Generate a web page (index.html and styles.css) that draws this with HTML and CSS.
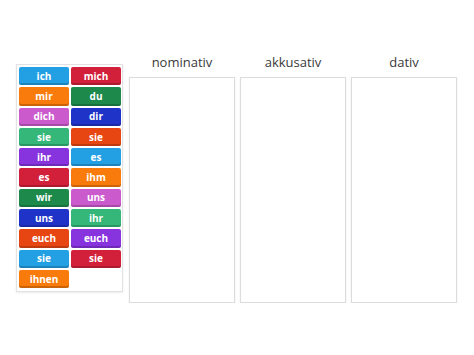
FILE: index.html
```html
<!DOCTYPE html>
<html lang="de">
<head>
<meta charset="utf-8">
<link rel="stylesheet" href="styles.css">
</head>
<body>
<div class="page">
  <div class="bank">
    <div class="tile blue">ich</div>
    <div class="tile red">mich</div>
    <div class="tile orange">mir</div>
    <div class="tile green">du</div>
    <div class="tile magenta">dich</div>
    <div class="tile navy">dir</div>
    <div class="tile teal">sie</div>
    <div class="tile vermilion">sie</div>
    <div class="tile purple">ihr</div>
    <div class="tile blue">es</div>
    <div class="tile red">es</div>
    <div class="tile orange">ihm</div>
    <div class="tile green">wir</div>
    <div class="tile magenta">uns</div>
    <div class="tile navy">uns</div>
    <div class="tile teal">ihr</div>
    <div class="tile vermilion">euch</div>
    <div class="tile purple">euch</div>
    <div class="tile blue">sie</div>
    <div class="tile red">sie</div>
    <div class="tile orange">ihnen</div>
  </div>
  <div class="groups">
    <div class="group">
      <div class="group-title">nominativ</div>
      <div class="group-box"></div>
    </div>
    <div class="group">
      <div class="group-title">akkusativ</div>
      <div class="group-box"></div>
    </div>
    <div class="group">
      <div class="group-title">dativ</div>
      <div class="group-box"></div>
    </div>
  </div>
</div>
</body>
</html>
```

FILE: styles.css
```css
html, body {
  margin: 0;
  padding: 0;
  background: #ffffff;
}

body {
  font-family: "Open Sans", "Liberation Sans", sans-serif;
}

.page {
  display: flex;
  align-items: flex-start;
  padding: 53px 0 0 16px;
}

.bank {
  margin-top: 11px;
  display: grid;
  grid-template-columns: 50px 50px;
  grid-auto-rows: 18.3px;
  column-gap: 2px;
  row-gap: 2px;
  padding: 2px 1px 2px 2px;
  border: 1px solid #e2e2e2;
  box-shadow: 0 1px 2px rgba(0, 0, 0, 0.08);
  background: #fff;
  height: 222px;
  box-sizing: content-box;
  align-content: start;
}

.tile {
  display: flex;
  align-items: center;
  justify-content: center;
  color: #ffffff;
  font-size: 10px;
  font-weight: 700;
  border-radius: 2px;
  box-shadow: inset 0 -2px 0 rgba(0, 0, 0, 0.18);
  padding-bottom: 1px;
  box-sizing: border-box;
}

.blue { background: #239fe3; }
.red { background: #d2203b; }
.orange { background: #f87b0c; }
.green { background: #1d8a4b; }
.magenta { background: #cb5acd; }
.navy { background: #2033c8; }
.teal { background: #34b778; }
.vermilion { background: #e74612; }
.purple { background: #8734df; }

.groups {
  display: grid;
  grid-template-columns: 106px 106px 106px;
  column-gap: 5px;
  margin-left: 6px;
}

.group {
  display: flex;
  flex-direction: column;
}

.group-title {
  text-align: center;
  font-size: 13px;
  line-height: 18px;
  color: #3a3a3a;
  height: 24px;
}

.group-box {
  height: 226px;
  border: 1px solid #dcdcdc;
  box-sizing: border-box;
  box-shadow: 0 1px 2px rgba(0, 0, 0, 0.08);
  background: #fff;
}
```
